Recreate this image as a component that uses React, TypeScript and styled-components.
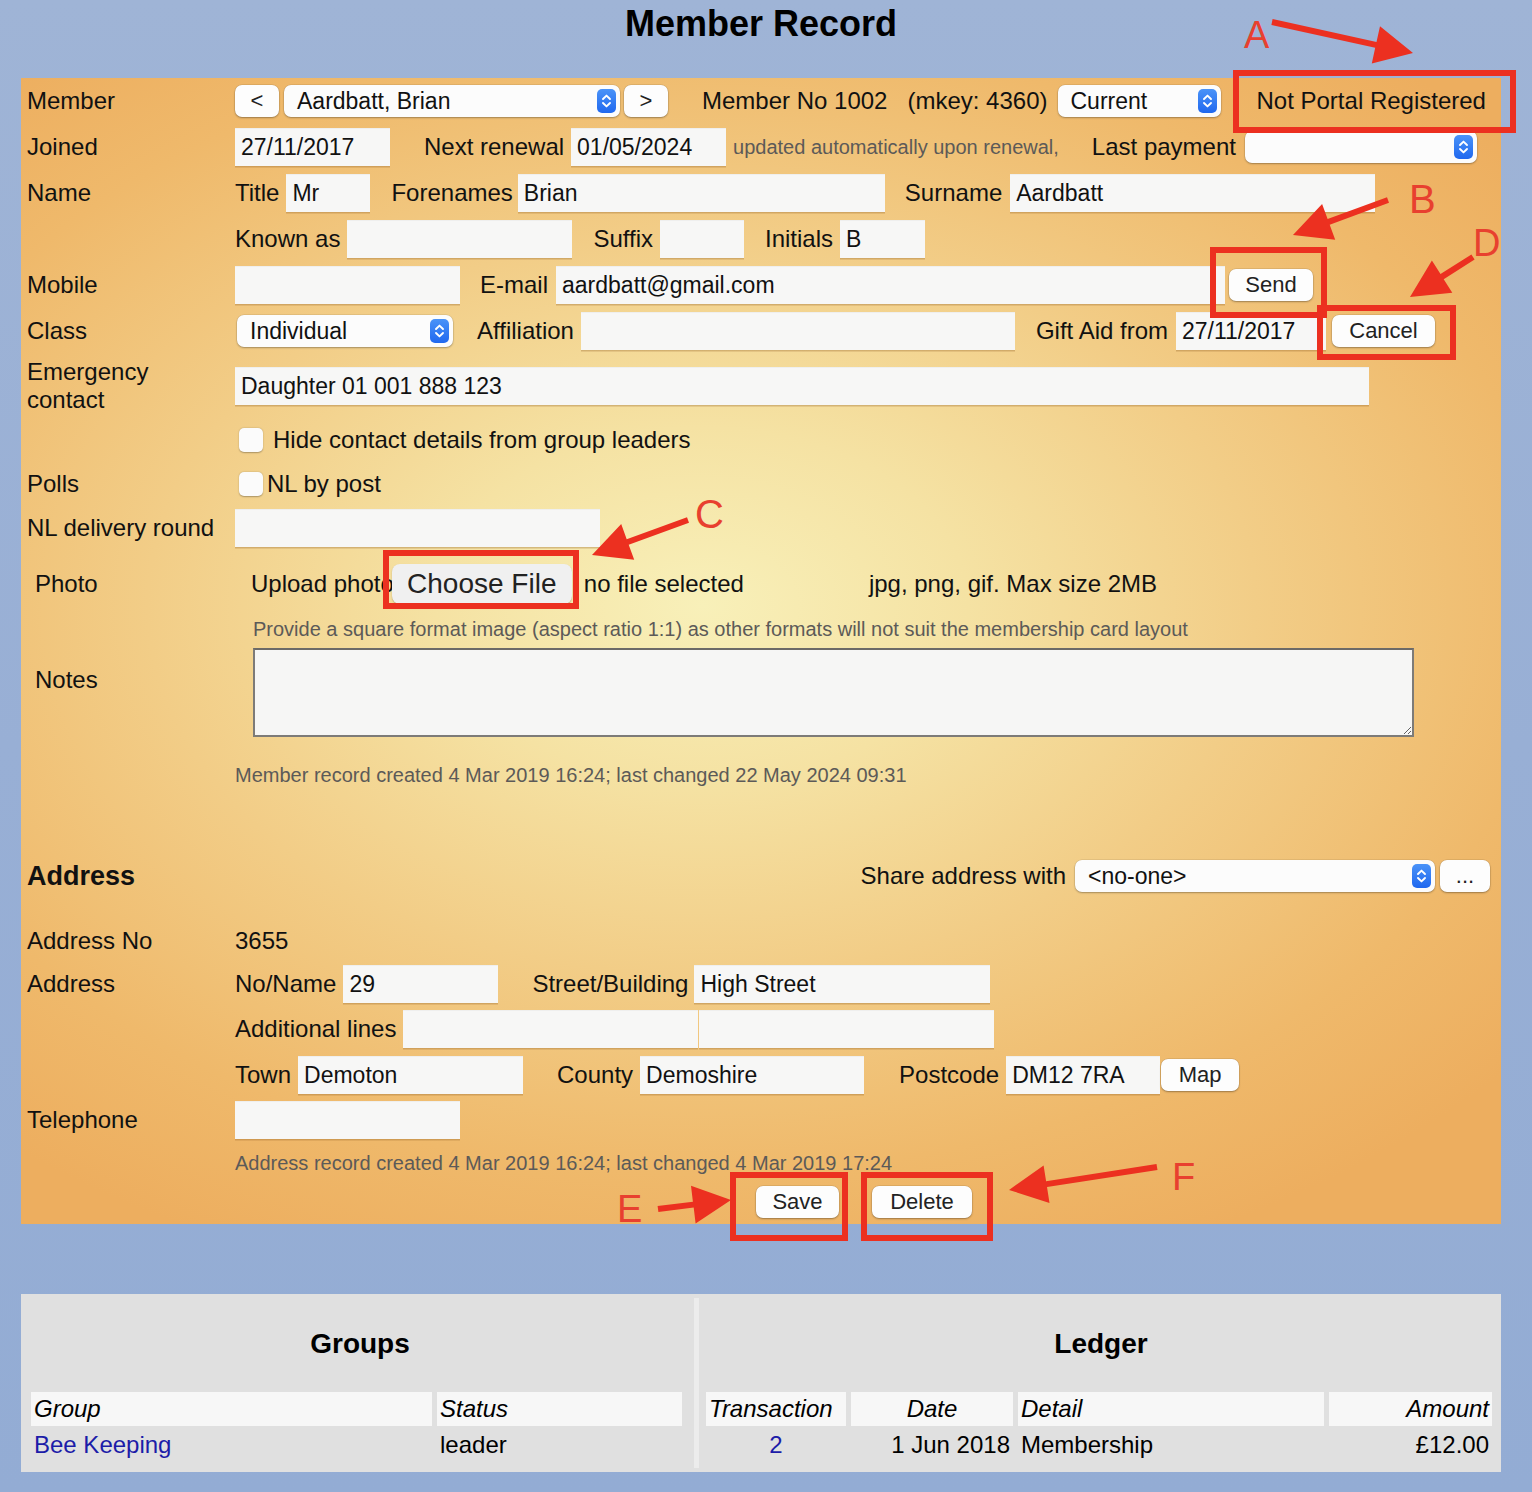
import React from "react";
import styled, { createGlobalStyle } from "styled-components";

const GlobalStyle = createGlobalStyle`
  html, body { margin: 0; padding: 0; }
  body {
    background: linear-gradient(180deg, #9fb4d6 0%, #98afd5 50%, #93acd4 100%);
    font-family: "Liberation Sans", Arial, Helvetica, sans-serif;
    color: #111;
  }
`;

const Page = styled.div`
  position: relative;
  width: 1532px;
  height: 1492px;
  overflow: hidden;
`;

const Column = styled.div`
  width: 1480px;
  margin-left: 21px;
`;

const Title = styled.h1`
  margin: 0;
  height: 78px;
  box-sizing: border-box;
  padding-top: 6px;
  font-size: 36px;
  line-height: 36px;
  font-weight: 700;
  text-align: center;
  color: #000;
`;

const Panel = styled.div`
  box-sizing: border-box;
  padding: 0 0 4px 6px;
  background: radial-gradient(
    ellipse 72% 62% at 46% 46%,
    #f8f0b9 0%,
    #f5e2a3 25%,
    #f2cd87 52%,
    #efb96b 80%,
    #edae5f 100%
  );
`;

const Row = styled.div<{ $h: number; $mt?: number; $top?: boolean }>`
  display: grid;
  grid-template-columns: 208px 1fr;
  height: ${(p) => p.$h}px;
  margin-top: ${(p) => p.$mt ?? 0}px;
  align-items: ${(p) => (p.$top ? "start" : "center")};
`;

const RowLabel = styled.div<{ $indent?: number; $pt?: number; $bold?: boolean }>`
  padding-left: ${(p) => p.$indent ?? 0}px;
  padding-top: ${(p) => p.$pt ?? 0}px;
  font-size: ${(p) => (p.$bold ? 27 : 24)}px;
  font-weight: ${(p) => (p.$bold ? 700 : 400)};
  line-height: 28px;
  color: #111;
  white-space: nowrap;
`;

const Fields = styled.div<{ $pl?: number; $pr?: number; $justify?: string; $top?: boolean }>`
  display: flex;
  align-items: ${(p) => (p.$top ? "flex-start" : "center")};
  justify-content: ${(p) => p.$justify ?? "flex-start"};
  padding-left: ${(p) => p.$pl ?? 0}px;
  padding-right: ${(p) => p.$pr ?? 0}px;
  height: 100%;
  box-sizing: border-box;
`;

const Lbl = styled.span<{ $ml?: number }>`
  flex-shrink: 0;
  margin-left: ${(p) => p.$ml ?? 0}px;
  font-size: 24px;
  line-height: 28px;
  white-space: nowrap;
  color: #111;
`;

const Note = styled.span<{ $ml?: number }>`
  flex-shrink: 0;
  margin-left: ${(p) => p.$ml ?? 0}px;
  font-size: 20px;
  line-height: 22px;
  white-space: nowrap;
  color: #5c5a58;
`;

const TextInput = styled.input<{ $w: number; $ml?: number }>`
  flex-shrink: 0;
  width: ${(p) => p.$w}px;
  height: 38px;
  margin: 0 0 0 ${(p) => p.$ml ?? 0}px;
  box-sizing: border-box;
  border: none;
  outline: none;
  padding: 0 6px;
  background: #f7f7f6;
  box-shadow: 0 1.5px 0 rgba(150, 100, 40, 0.35), inset 0 1px 0 rgba(0, 0, 0, 0.03);
  font-family: "Liberation Sans", Arial, sans-serif;
  font-size: 23px;
  color: #111;
`;

const SelectBox = styled.div<{ $w: number; $ml?: number }>`
  flex-shrink: 0;
  display: flex;
  align-items: center;
  justify-content: space-between;
  width: ${(p) => p.$w}px;
  height: 32px;
  margin-left: ${(p) => p.$ml ?? 0}px;
  box-sizing: border-box;
  padding: 0 4px 0 13px;
  background: #fcfcfc;
  border-radius: 7px;
  box-shadow: 0 1px 2px rgba(0, 0, 0, 0.28), 0 0 0 0.5px rgba(0, 0, 0, 0.1);
  font-size: 23px;
  color: #111;
  white-space: nowrap;
`;

const MacButton = styled.button<{ $w: number; $ml?: number }>`
  flex-shrink: 0;
  width: ${(p) => p.$w}px;
  height: 32px;
  margin-left: ${(p) => p.$ml ?? 0}px;
  padding: 0;
  border: none;
  border-radius: 7px;
  background: #fdfdfd;
  box-shadow: 0 1px 2px rgba(0, 0, 0, 0.3), 0 0 0 0.5px rgba(0, 0, 0, 0.12);
  font-family: "Liberation Sans", Arial, sans-serif;
  font-size: 22px;
  color: #222;
  cursor: pointer;
`;

const FileButton = styled.button`
  flex-shrink: 0;
  position: relative;
  width: 180px;
  height: 40px;
  margin-left: -2px;
  padding: 0;
  border: none;
  border-radius: 8px;
  background: #f0f0f0;
  box-shadow: 0 1px 1.5px rgba(0, 0, 0, 0.25);
  font-family: "Liberation Sans", Arial, sans-serif;
  font-size: 28px;
  color: #222;
`;

const Check = styled.span<{ $ml?: number }>`
  flex-shrink: 0;
  display: inline-block;
  width: 24px;
  height: 24px;
  margin-left: ${(p) => p.$ml ?? 0}px;
  border-radius: 5px;
  background: #fbfbfb;
  box-shadow: 0 0.5px 1.5px rgba(0, 0, 0, 0.3);
`;

const NotesArea = styled.textarea`
  flex-shrink: 0;
  width: 1161px;
  height: 89px;
  margin-top: 12px;
  box-sizing: border-box;
  border: 2px solid #7d7b78;
  border-top-color: #6c6a67;
  background: #f6f6f5;
  outline: none;
`;

const Groups = styled.div`
  display: flex;
  height: 178px;
  margin-top: 70px;
  background: #e0e0e0;
`;

const Section = styled.div<{ $w: number; $pl: number }>`
  width: ${(p) => p.$w}px;
  padding-left: ${(p) => p.$pl}px;
  box-sizing: border-box;
`;

const SectionTitle = styled.h2`
  margin: 0;
  padding-top: 34px;
  font-size: 28px;
  line-height: 32px;
  font-weight: 700;
  text-align: center;
  color: #000;
`;

const Divider = styled.div`
  width: 5px;
  margin: 4px 0;
  background: #ececec;
`;

const DataTable = styled.table<{ $w: number }>`
  width: ${(p) => p.$w}px;
  margin-top: 32px;
  border-collapse: separate;
  border-spacing: 5px 0;
  table-layout: fixed;
  font-size: 24px;
`;

const Th = styled.th<{ $w: number; $align?: string }>`
  width: ${(p) => p.$w}px;
  height: 34px;
  box-sizing: border-box;
  padding: 0 3px;
  background: #f7f7f7;
  font-style: italic;
  font-weight: 400;
  text-align: ${(p) => p.$align ?? "left"};
  white-space: nowrap;
  color: #000;
`;

const Td = styled.td<{ $align?: string }>`
  height: 38px;
  box-sizing: border-box;
  padding: 0 3px;
  text-align: ${(p) => p.$align ?? "left"};
  white-space: nowrap;
  color: #000;
`;

const Link = styled.a`
  color: #1c1ca8;
  text-decoration: none;
`;

const Overlay = styled.svg`
  position: absolute;
  top: 0;
  left: 0;
  pointer-events: none;
`;

const Stepper = () => (
  <svg width="19" height="24" viewBox="0 0 19 24">
    <defs>
      <linearGradient id="stp" x1="0" y1="0" x2="0" y2="1">
        <stop offset="0" stopColor="#4a93f8" />
        <stop offset="1" stopColor="#2068ef" />
      </linearGradient>
    </defs>
    <rect x="0" y="0" width="19" height="24" rx="5" fill="url(#stp)" />
    <path d="M6 10 L9.5 6.6 L13 10" fill="none" stroke="#fff" strokeWidth="1.9" strokeLinecap="round" strokeLinejoin="round" />
    <path d="M6 14 L9.5 17.4 L13 14" fill="none" stroke="#fff" strokeWidth="1.9" strokeLinecap="round" strokeLinejoin="round" />
  </svg>
);

const Select: React.FC<{ w: number; ml?: number; value?: string }> = ({ w, ml, value }) => (
  <SelectBox $w={w} $ml={ml}>
    <span>{value ?? ""}</span>
    <Stepper />
  </SelectBox>
);

const In: React.FC<{ w: number; ml?: number; v?: string }> = ({ w, ml, v }) => (
  <TextInput $w={w} $ml={ml} defaultValue={v ?? ""} />
);

const RED = "#ec3020";

function arrowPoints(x1: number, y1: number, x2: number, y2: number, L: number, W: number, S: number) {
  const dx = x2 - x1;
  const dy = y2 - y1;
  const len = Math.hypot(dx, dy);
  const ux = dx / len;
  const uy = dy / len;
  const px = -uy;
  const py = ux;
  const bx = x2 - ux * L;
  const by = y2 - uy * L;
  const s = S / 2;
  const pts = [
    [x1 + px * s, y1 + py * s],
    [bx + px * s, by + py * s],
    [bx + px * W, by + py * W],
    [x2, y2],
    [bx - px * W, by - py * W],
    [bx - px * s, by - py * s],
    [x1 - px * s, y1 - py * s],
  ];
  return pts.map((p) => `${p[0].toFixed(1)},${p[1].toFixed(1)}`).join(" ");
}

const arrows = [
  { k: "A", a: [1272, 22, 1413, 53] },
  { k: "B", a: [1388, 200, 1293, 235] },
  { k: "D", a: [1473, 257, 1410, 297] },
  { k: "C", a: [688, 520, 592, 555] },
  { k: "E", a: [658, 1209, 731, 1200] },
  { k: "F", a: [1157, 1167, 1009, 1190] },
];

const boxes = [
  { k: "A", x: 1236, y: 73, w: 277, h: 57 },
  { k: "B", x: 1213, y: 250, w: 111, h: 65 },
  { k: "D", x: 1320, y: 308, w: 133, h: 49 },
  { k: "C", x: 386, y: 553, w: 190, h: 53 },
  { k: "E", x: 733, y: 1175, w: 112, h: 63 },
  { k: "F", x: 864, y: 1175, w: 126, h: 63 },
];

const letters = [
  { k: "A", x: 1244, y: 48, s: 38 },
  { k: "B", x: 1409, y: 213, s: 40 },
  { k: "C", x: 695, y: 528, s: 40 },
  { k: "D", x: 1473, y: 256, s: 38 },
  { k: "E", x: 617, y: 1222, s: 38 },
  { k: "F", x: 1172, y: 1190, s: 38 },
];

export default function App() {
  return (
    <>
      <GlobalStyle />
      <Page>
        <Column>
          <Title>Member Record</Title>
          <Panel>
            <Row $h={46}>
              <RowLabel>Member</RowLabel>
              <Fields>
                <MacButton $w={44}>&lt;</MacButton>
                <Select w={336} ml={5} value="Aardbatt, Brian" />
                <MacButton $w={44} $ml={4}>&gt;</MacButton>
                <Lbl $ml={34}>Member No 1002</Lbl>
                <Lbl $ml={20}>(mkey: 4360)</Lbl>
                <Select w={163} ml={10} value="Current" />
                <Lbl $ml={36}>Not Portal Registered</Lbl>
              </Fields>
            </Row>
            <Row $h={46}>
              <RowLabel>Joined</RowLabel>
              <Fields>
                <In w={155} v="27/11/2017" />
                <Lbl $ml={34}>Next renewal</Lbl>
                <In w={155} ml={7} v="01/05/2024" />
                <Note $ml={7}>updated automatically upon renewal,</Note>
                <Lbl $ml={33}>Last payment</Lbl>
                <Select w={232} ml={9} />
              </Fields>
            </Row>
            <Row $h={46}>
              <RowLabel>Name</RowLabel>
              <Fields>
                <Lbl>Title</Lbl>
                <In w={84} ml={7} v="Mr" />
                <Lbl $ml={21}>Forenames</Lbl>
                <In w={367} ml={5} v="Brian" />
                <Lbl $ml={20}>Surname</Lbl>
                <In w={365} ml={8} v="Aardbatt" />
              </Fields>
            </Row>
            <Row $h={46}>
              <RowLabel />
              <Fields>
                <Lbl>Known as</Lbl>
                <In w={225} ml={7} />
                <Lbl $ml={21}>Suffix</Lbl>
                <In w={84} ml={7} />
                <Lbl $ml={21}>Initials</Lbl>
                <In w={85} ml={7} v="B" />
              </Fields>
            </Row>
            <Row $h={46}>
              <RowLabel>Mobile</RowLabel>
              <Fields>
                <In w={225} />
                <Lbl $ml={20}>E-mail</Lbl>
                <In w={669} ml={8} v="aardbatt@gmail.com" />
                <MacButton $w={84} $ml={4}>Send</MacButton>
              </Fields>
            </Row>
            <Row $h={46}>
              <RowLabel>Class</RowLabel>
              <Fields>
                <Select w={216} ml={2} value="Individual" />
                <Lbl $ml={24}>Affiliation</Lbl>
                <In w={434} ml={7} />
                <Lbl $ml={21}>Gift Aid from</Lbl>
                <In w={150} ml={8} v="27/11/2017" />
                <MacButton $w={103} $ml={6}>Cancel</MacButton>
              </Fields>
            </Row>
            <Row $h={64}>
              <RowLabel>
                Emergency
                <br />
                contact
              </RowLabel>
              <Fields>
                <In w={1134} v="Daughter 01 001 888 123" />
              </Fields>
            </Row>
            <Row $h={44}>
              <RowLabel />
              <Fields>
                <Check $ml={4} />
                <Lbl $ml={10}>Hide contact details from group leaders</Lbl>
              </Fields>
            </Row>
            <Row $h={44}>
              <RowLabel>Polls</RowLabel>
              <Fields>
                <Check $ml={4} />
                <Lbl $ml={4}>NL by post</Lbl>
              </Fields>
            </Row>
            <Row $h={44}>
              <RowLabel>NL delivery round</RowLabel>
              <Fields>
                <In w={365} />
              </Fields>
            </Row>
            <Row $h={68}>
              <RowLabel $indent={8}>Photo</RowLabel>
              <Fields $pl={16}>
                <Lbl>Upload photo</Lbl>
                <FileButton>Choose File</FileButton>
                <Lbl $ml={12}>no file selected</Lbl>
                <Lbl $ml={125}>jpg, png, gif. Max size 2MB</Lbl>
              </Fields>
            </Row>
            <Row $h={18}>
              <RowLabel />
              <Fields $pl={18}>
                <Note>
                  Provide a square format image (aspect ratio 1:1) as other formats will not suit the membership card layout
                </Note>
              </Fields>
            </Row>
            <Row $h={109} $top>
              <RowLabel $indent={8} $pt={30}>
                Notes
              </RowLabel>
              <Fields $pl={18} $top>
                <NotesArea />
              </Fields>
            </Row>
            <Row $h={60}>
              <RowLabel />
              <Fields>
                <Note>Member record created 4 Mar 2019 16:24; last changed 22 May 2024 09:31</Note>
              </Fields>
            </Row>
            <Row $h={60} $mt={41}>
              <RowLabel $bold>Address</RowLabel>
              <Fields $justify="flex-end" $pr={11}>
                <Lbl>Share address with</Lbl>
                <Select w={360} ml={9} value="<no-one>" />
                <MacButton $w={50} $ml={5}>...</MacButton>
              </Fields>
            </Row>
            <Row $h={42} $mt={14}>
              <RowLabel>Address No</RowLabel>
              <Fields>
                <Lbl>3655</Lbl>
              </Fields>
            </Row>
            <Row $h={44}>
              <RowLabel>Address</RowLabel>
              <Fields>
                <Lbl>No/Name</Lbl>
                <In w={155} ml={7} v="29" />
                <Lbl $ml={34}>Street/Building</Lbl>
                <In w={296} ml={6} v="High Street" />
              </Fields>
            </Row>
            <Row $h={46}>
              <RowLabel />
              <Fields>
                <Lbl>Additional lines</Lbl>
                <In w={295} ml={7} />
                <In w={295} ml={1} />
              </Fields>
            </Row>
            <Row $h={46}>
              <RowLabel />
              <Fields>
                <Lbl>Town</Lbl>
                <In w={225} ml={7} v="Demoton" />
                <Lbl $ml={34}>County</Lbl>
                <In w={224} ml={7} v="Demoshire" />
                <Lbl $ml={35}>Postcode</Lbl>
                <In w={154} ml={7} v="DM12 7RA" />
                <MacButton $w={78} $ml={1}>Map</MacButton>
              </Fields>
            </Row>
            <Row $h={44}>
              <RowLabel>Telephone</RowLabel>
              <Fields>
                <In w={225} />
              </Fields>
            </Row>
            <Row $h={42}>
              <RowLabel />
              <Fields>
                <Note>Address record created 4 Mar 2019 16:24; last changed 4 Mar 2019 17:24</Note>
              </Fields>
            </Row>
            <Row $h={36}>
              <RowLabel />
              <Fields $justify="center" $pr={8}>
                <MacButton $w={83}>Save</MacButton>
                <MacButton $w={100} $ml={33}>Delete</MacButton>
              </Fields>
            </Row>
          </Panel>

          <Groups>
            <Section $w={673} $pl={5}>
              <SectionTitle>Groups</SectionTitle>
              <DataTable $w={661}>
                <thead>
                  <tr>
                    <Th $w={401}>Group</Th>
                    <Th $w={245}>Status</Th>
                  </tr>
                </thead>
                <tbody>
                  <tr>
                    <Td>
                      <Link href="#">Bee Keeping</Link>
                    </Td>
                    <Td>leader</Td>
                  </tr>
                </tbody>
              </DataTable>
            </Section>
            <Divider />
            <Section $w={802} $pl={2}>
              <SectionTitle>Ledger</SectionTitle>
              <DataTable $w={796}>
                <thead>
                  <tr>
                    <Th $w={140}>Transaction</Th>
                    <Th $w={162} $align="center">Date</Th>
                    <Th $w={306}>Detail</Th>
                    <Th $w={163} $align="right">Amount</Th>
                  </tr>
                </thead>
                <tbody>
                  <tr>
                    <Td $align="center">
                      <Link href="#">2</Link>
                    </Td>
                    <Td $align="right">1 Jun 2018</Td>
                    <Td>Membership</Td>
                    <Td $align="right">£12.00</Td>
                  </tr>
                </tbody>
              </DataTable>
            </Section>
          </Groups>
        </Column>

        <Overlay width="1532" height="1492" viewBox="0 0 1532 1492">
          {boxes.map((b) => (
            <rect key={b.k} x={b.x} y={b.y} width={b.w} height={b.h} fill="none" stroke={RED} strokeWidth="6" />
          ))}
          {arrows.map((a) => (
            <polygon key={a.k} points={arrowPoints(a.a[0], a.a[1], a.a[2], a.a[3], 38, 19, 6)} fill={RED} />
          ))}
          {letters.map((l) => (
            <text
              key={l.k}
              x={l.x}
              y={l.y}
              fontSize={l.s}
              fill="#e8402f"
              fontFamily="Liberation Sans, Arial, sans-serif"
            >
              {l.k}
            </text>
          ))}
        </Overlay>
      </Page>
    </>
  );
}
